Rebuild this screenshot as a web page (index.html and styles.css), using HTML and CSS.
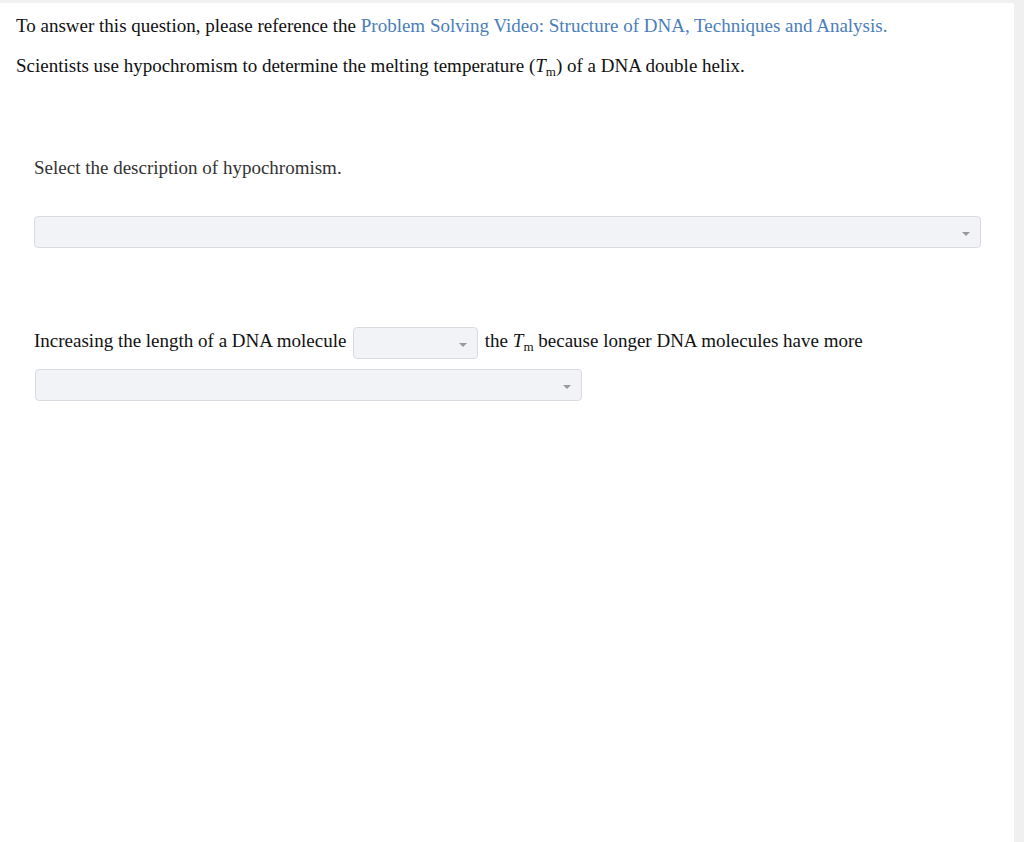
FILE: index.html
```html
<!DOCTYPE html>
<html lang="en">
<head>
  <meta charset="UTF-8">
  <title>Question</title>
  <link rel="stylesheet" href="styles.css">
</head>
<body>
  <div class="panel">
    <p class="intro">To answer this question, please reference the <a href="#">Problem Solving Video: Structure of DNA, Techniques and Analysis.</a></p>
    <p class="intro">Scientists use hypochromism to determine the melting temperature (<i>T</i><sub>m</sub>) of a DNA double helix.</p>

    <div class="part first">
      <p class="prompt">Select the description of hypochromism.</p>
      <div class="dropdown wide"><span class="caret"></span></div>
    </div>

    <div class="part second">
      <p class="sentence">
        Increasing the length of a DNA molecule
        <span class="dropdown small"><span class="caret"></span></span>
        the <i>T</i><sub>m</sub> because longer DNA molecules have more
      </p>
      <div class="dropdown half"><span class="caret"></span></div>
    </div>
  </div>
</body>
</html>
```

FILE: styles.css
```css
* {
  margin: 0;
  padding: 0;
  box-sizing: border-box;
}

body {
  background: #f0f0f0;
  font-family: "Liberation Serif", "Times New Roman", serif;
  font-size: 19px;
  color: #111;
}

/* main panel */
.panel {
  margin-top: 3px;
  width: 1014px;
  min-height: 839px;
  background: #fff;
  padding: 12px 16px;
}

.intro {
  line-height: 22px;
  margin-bottom: 18px;
}

.intro a {
  color: #4a7ebb;
  text-decoration: none;
}

sub {
  font-size: 13px;
  vertical-align: -4px;
  line-height: 0;
}

/* question parts */
.part {
  padding-left: 18px;
}

.first {
  margin-top: 80px;
}

.prompt {
  color: #333;
  line-height: 22px;
}

.dropdown {
  position: relative;
  background: #f2f3f7;
  border: 1px solid #d9dbe0;
  border-radius: 4px;
  height: 32px;
}

.wide {
  width: 947px;
  margin-top: 37px;
}

.second {
  margin-top: 77px;
}

.sentence {
  line-height: 32px;
}

.small {
  display: inline-block;
  vertical-align: middle;
  width: 125px;
  height: 32px;
  margin: 0 2px 0 2px;
}

.half {
  width: 547px;
  margin-top: 10px;
  margin-left: 1px;
}

.caret {
  position: absolute;
  right: 10px;
  top: 15px;
  width: 0;
  height: 0;
  border-left: 4px solid transparent;
  border-right: 4px solid transparent;
  border-top: 4px solid #999;
}
```
